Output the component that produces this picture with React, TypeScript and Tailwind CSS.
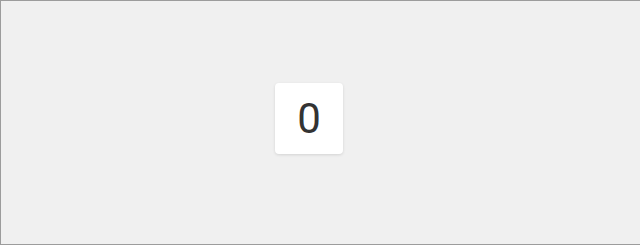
export default function App() {
  return (
    <div
      className="flex h-[245px] w-[640px] items-center justify-center border border-r-0 border-[#9c9c9c] bg-[#f0f0f0] pb-[8px] pr-[23px]"
      style={{ fontFamily: "Roboto, 'Noto Sans', sans-serif" }}
    >
      <div className="flex h-[71px] w-[68px] items-center justify-center rounded-[4px] bg-white shadow-[0_1px_3px_rgba(0,0,0,0.12)]">
        <span className="text-[42px] leading-none text-[#333333]">0</span>
      </div>
    </div>
  );
}
